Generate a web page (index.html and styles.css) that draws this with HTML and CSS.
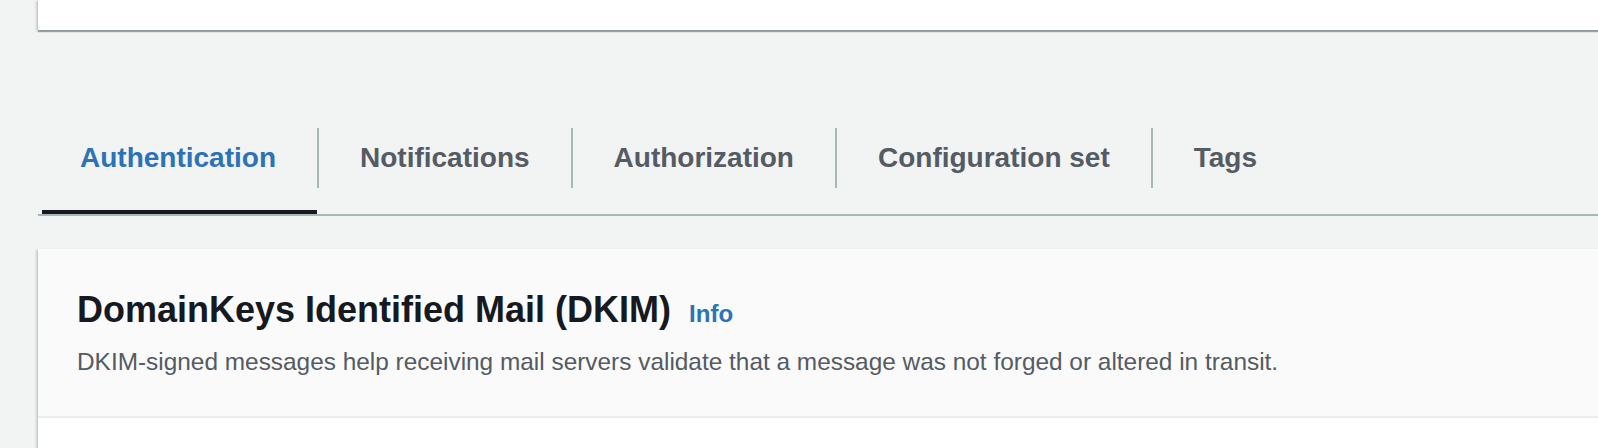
FILE: index.html
```html
<!DOCTYPE html>
<html lang="en">
<head>
  <meta charset="UTF-8">
  <meta name="viewport" content="width=device-width, initial-scale=1.0">
  <title>Identity details</title>
  <link rel="stylesheet" href="styles.css">
</head>
<body>

<div class="page">
  <div class="summary-card"></div>

  <div class="tabs">
    <button class="tab active"><span class="tab-label">Authentication</span></button>
    <button class="tab"><span class="tab-label">Notifications</span></button>
    <button class="tab"><span class="tab-label">Authorization</span></button>
    <button class="tab"><span class="tab-label">Configuration set</span></button>
    <button class="tab"><span class="tab-label">Tags</span></button>
  </div>

  <div class="panel">
    <div class="panel-header">
      <h2>DomainKeys Identified Mail (DKIM) <a href="#" class="info">Info</a></h2>
      <p class="description">DKIM-signed messages help receiving mail servers validate that a message was not forged or altered in transit.</p>
    </div>
    <div class="panel-body"></div>
  </div>
</div>

</body>
</html>
```

FILE: styles.css
```css
body {
  margin: 0;
  background: #f2f3f3;
  font-family: "Liberation Sans", Arial, sans-serif;
  overflow: hidden;
}

.page {
  padding-left: 38px;
  margin-right: -40px;
}

.summary-card {
  height: 30px;
  background: #fff;
  box-shadow: 0 2px 1px 0 rgba(0, 28, 36, 0.35), -2px 1px 2px 0 rgba(0, 28, 36, 0.15);
}

.tabs {
  display: flex;
  margin-top: 98px;
  padding-left: 4px;
  border-bottom: 2px solid #aab7b8;
}

.tab {
  background: none;
  border: none;
  border-bottom: 4px solid transparent;
  padding: 0 0 22px 0;
  margin: 0;
  font-family: inherit;
  font-size: 28px;
  font-weight: bold;
  color: #545b64;
  cursor: pointer;
}

.tab.active {
  color: #2b72b8;
  border-bottom-color: #16191f;
}

.tab-label {
  display: block;
  line-height: 60px;
  padding: 0 41px;
  border-left: 2px solid #aab7b8;
}

.tab:first-child .tab-label {
  border-left: none;
  padding-left: 38px;
}

.panel {
  margin-top: 33px;
  background: #fff;
  box-shadow: 0 2px 1px 0 rgba(0, 28, 36, 0.3), -2px 1px 2px 0 rgba(0, 28, 36, 0.15);
}

.panel-header {
  background: #fafafa;
  border-bottom: 2px solid #eaeded;
  padding: 39px 40px 36px 39px;
}

h2 {
  margin: 0;
  font-size: 36px;
  line-height: 44px;
  color: #16191f;
}

.info {
  margin-left: 8px;
  font-size: 24px;
  color: #2b72b8;
  text-decoration: none;
}

.description {
  margin: 8px 0 0 0;
  font-size: 24.4px;
  line-height: 36px;
  color: #545b64;
}

.panel-body {
  height: 80px;
}
```
